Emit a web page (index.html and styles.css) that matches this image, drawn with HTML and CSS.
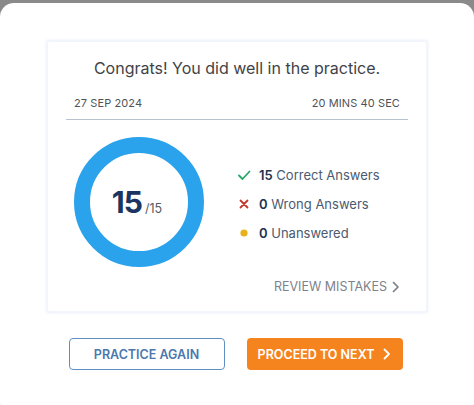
FILE: index.html
```html
<!DOCTYPE html>
<html>
<head>
<meta charset="utf-8">
<link rel="stylesheet" href="styles.css">
</head>
<body>
<div class="modal">
  <div class="card">
    <h1 class="title">Congrats! You did well in the practice.</h1>
    <div class="meta">
      <span>27 SEP 2024</span>
      <span>20 MINS 40 SEC</span>
    </div>
    <div class="body">
      <div class="donut">
        <div class="score"><span class="big">15</span><span class="small">/15</span></div>
      </div>
      <ul class="stats">
        <li>
          <svg class="ic" width="14" height="14" viewBox="0 0 14 14"><path d="M2 7.5 L5.5 11 L12.5 3.5" fill="none" stroke="#27a86a" stroke-width="1.8" stroke-linecap="round" stroke-linejoin="round"/></svg>
          <b>15</b>&nbsp;Correct Answers
        </li>
        <li>
          <svg class="ic" width="14" height="14" viewBox="0 0 14 14"><path d="M3.5 3.5 L10.5 10.5 M10.5 3.5 L3.5 10.5" fill="none" stroke="#c8362b" stroke-width="1.8" stroke-linecap="round"/></svg>
          <b>0</b>&nbsp;Wrong Answers
        </li>
        <li>
          <svg class="ic" width="14" height="14" viewBox="0 0 14 14"><circle cx="7" cy="7" r="3.6" fill="#e8b21c"/></svg>
          <b>0</b>&nbsp;Unanswered
        </li>
      </ul>
    </div>
    <div class="review">REVIEW MISTAKES
      <svg width="9" height="12" viewBox="0 0 9 12"><path d="M2.5 1.5 L7 6 L2.5 10.5" fill="none" stroke="#7a7f86" stroke-width="1.7" stroke-linecap="round" stroke-linejoin="round"/></svg>
    </div>
  </div>
  <div class="actions">
    <button class="btn outline">PRACTICE AGAIN</button>
    <button class="btn solid">PROCEED TO NEXT
      <svg width="9" height="12" viewBox="0 0 9 12"><path d="M2.5 1.5 L7 6 L2.5 10.5" fill="none" stroke="#fff" stroke-width="1.8" stroke-linecap="round" stroke-linejoin="round"/></svg>
    </button>
  </div>
</div>
</body>
</html>
```
FILE: styles.css
```css
html, body {
  margin: 0;
  padding: 0;
}
body {
  background: #8a8a8a;
  width: 474px;
  height: 405px;
  overflow: hidden;
  font-family: Inter, "Liberation Sans", sans-serif;
}
.modal {
  margin-top: 3px;
  height: 414px;
  background: #fff;
  border-radius: 14px;
  padding: 37px 0 0 0;
  box-sizing: border-box;
}
.card {
  margin: 0 46px 0 46px;
  height: 273px;
  box-sizing: border-box;
  background: #fff;
  border: 2px solid #f2f5fb;
  box-shadow: 0 0 3px rgba(220, 228, 242, 0.6);
  border-radius: 3px;
  padding: 14px 18px 0 18px;
}
.title {
  margin: 0;
  text-align: center;
  font-size: 16px;
  font-weight: 400;
  color: #3f4347;
  line-height: 24px;
}
.meta {
  display: flex;
  justify-content: space-between;
  font-size: 11px;
  color: #4f5358;
  padding: 16px 8px 0 8px;
  line-height: 14px;
  border-bottom: 1.5px solid #b8c2cc;
  padding-bottom: 9px;
  letter-spacing: 0.1px;
}
.body {
  display: flex;
  align-items: center;
  padding: 17px 0 0 8px;
}
.donut {
  width: 130px;
  height: 130px;
  box-sizing: border-box;
  border: 16px solid #2aa3ec;
  border-radius: 50%;
  display: flex;
  align-items: center;
  justify-content: center;
}
.score {
  display: flex;
  align-items: baseline;
  padding-right: 4px;
}
.big {
  font-size: 30px;
  font-weight: 700;
  color: #1b3461;
  letter-spacing: -1px;
}
.small {
  font-size: 12.5px;
  color: #555b63;
  margin-left: 3px;
}
.stats {
  list-style: none;
  margin: 3px 0 0 33px;
  padding: 0;
  display: flex;
  flex-direction: column;
  gap: 11px;
}
.stats li {
  display: flex;
  align-items: center;
  font-size: 13px;
  line-height: 18px;
  color: #4b5a70;
}
.stats b {
  font-weight: 600;
  color: #22324d;
}
.ic {
  margin-right: 8px;
}
.review {
  display: flex;
  justify-content: flex-end;
  align-items: center;
  gap: 4px;
  margin-top: 12px;
  padding-right: 8px;
  font-size: 12.5px;
  color: #7e838a;
  line-height: 16px;
}
.actions {
  display: flex;
  justify-content: center;
  gap: 22px;
  margin-top: 25px;
  padding-right: 3px;
}
.btn {
  width: 156px;
  height: 32px;
  border-radius: 4px;
  font-family: Inter, "Liberation Sans", sans-serif;
  font-size: 12.5px;
  font-weight: 600;
  display: flex;
  align-items: center;
  justify-content: center;
  gap: 8px;
  box-sizing: border-box;
  padding: 0;
}
.outline {
  background: #fff;
  border: 1.5px solid #5f8fc2;
  color: #4a78ae;
}
.solid {
  background: #f5841f;
  border: none;
  color: #fff;
}
```
